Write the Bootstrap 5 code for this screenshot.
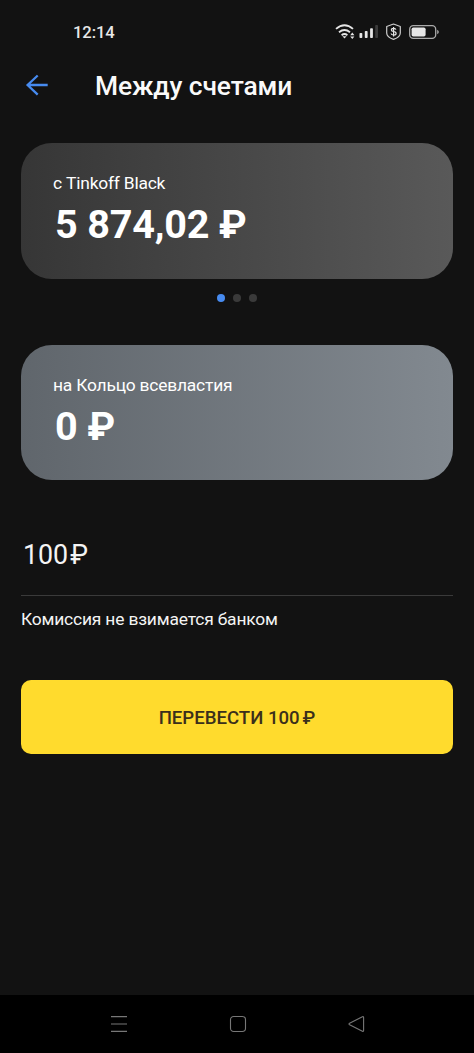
<!DOCTYPE html>
<html lang="ru">
<head>
<meta charset="utf-8">
<meta name="viewport" content="width=device-width, initial-scale=1">
<title>Между счетами</title>
<link href="https://cdn.jsdelivr.net/npm/bootstrap@5.3.0/dist/css/bootstrap.min.css" rel="stylesheet">
<style>
body{background:#121212;color:#fff;font-family:Roboto,"Noto Sans",sans-serif;min-height:1053px;overflow:hidden}
svg{display:block;flex:none}
.status{height:64px;padding:0 34px 0 73px}
.clock{font-size:16.6px;line-height:20px;font-weight:500;color:#e8e8e8;letter-spacing:-.1px;padding-top:1px}
.topbar{height:79px;padding-left:25px}
.title{font-size:26.4px;line-height:42px;font-weight:500;margin:1px 0 0 46px;color:#fafafa;letter-spacing:-.13px}
.content{padding:0 21px}
.account{height:135.5px;border-radius:31px;padding:28px 32px}
.from{background:linear-gradient(90deg,#363636,#595959)}
.to{background:linear-gradient(90deg,#60666c,#828990)}
.label{font-size:17.4px;line-height:24px;letter-spacing:-.2px}
.amount{font-size:39.6px;line-height:48px;font-weight:700;margin:6px 0 0 2px;letter-spacing:-.2px}
.dots{height:66px;padding-top:15.5px;gap:7.6px}
.dots i{width:8.2px;height:8.2px;border-radius:50%;background:#3a3a3a}
.dots i.on{background:#478bf0}
.sum{height:115.5px;padding:58px 0 0 2px;font-size:26.8px;line-height:34px;color:#f4f4f4;border-bottom:1px solid #3a3a3a}
.sum span{margin-left:2px}
.fee{font-size:17.4px;line-height:24px;margin-top:11px;color:#f4f4f4;letter-spacing:-.17px}
.pay{height:73.5px;border-radius:10px;background:#ffdb2d;color:#3b2f1b;font-size:18.6px;line-height:24px;font-weight:500;margin-top:49.5px;--bs-btn-hover-bg:#ffdb2d}
.pay.btn{padding:1.5px 0 0}
.pay span{margin-left:3px}
.sysnav{height:58px;background:#000;padding:0 108px 0 109px}
</style>
</head>
<body class="d-flex flex-column">
<header class="status d-flex align-items-center justify-content-between">
  <span class="clock">12:14</span>
  <svg width="105" height="20" viewBox="335 22 105 20" fill="none" stroke="#e6e6e6">
    <g stroke-width="1.8"><path d="M336 28.9Q344.5 21.7 353 28.9M339 32.2Q344.5 27.8 350 32.2M341.6 35.2Q344.5 32.8 347.4 35.2"/></g>
    <path d="M342.4 36.2h4.2l-2.1 2.4zM350.2 35.2l2.1-2.6 2.1 2.6zM350.2 36.4l2.1 2.6 2.1-2.6z" fill="#e6e6e6" stroke="none"/>
    <g fill="#e6e6e6" stroke="none"><rect x="359.5" y="33" width="2.8" height="5" rx=".8"/><rect x="364.8" y="31" width="2.8" height="7" rx=".8"/><rect x="370.1" y="28.2" width="2.8" height="9.8" rx=".8"/><rect x="375.2" y="25" width="2.8" height="13" rx=".8" fill="#3b3b3b"/></g>
    <path d="M393.5 24l6.8 2.5v6.4q0 3.9-6.8 6.5-6.8-2.6-6.8-6.5v-6.4z" stroke="#ccc" stroke-width="1.2" stroke-linejoin="round"/>
    <path d="M395.9 29.6q-.3-1.3-2.3-1.3-2.2 0-2.2 1.6 0 1.2 2.2 1.6 2.5.4 2.5 1.9 0 1.6-2.5 1.6-2.2 0-2.5-1.5M393.6 27v9.4" stroke-width="1.2"/>
    <rect x="409.7" y="25.7" width="26" height="12.6" rx="3.6" stroke="#aaa" stroke-width="1.3"/>
    <rect x="411.6" y="27.6" width="14" height="8.8" rx="1.7" fill="#e6e6e6" stroke="none"/>
    <path d="M437.2 29.7q1.6.7 1.6 2.3t-1.6 2.3z" fill="#aaa" stroke="none"/>
  </svg>
</header>
<nav class="topbar d-flex align-items-start">
  <svg width="24" height="42" viewBox="25 64 24 42" fill="none" stroke="#478bf0" stroke-width="2.3"><path d="M47.7 85H27.5M37.7 75.5L27.6 85l10.1 9.6"/></svg>
  <h1 class="title">Между счетами</h1>
</nav>
<main class="content flex-grow-1 d-flex flex-column">
  <section class="account from">
    <div class="label">с Tinkoff Black</div>
    <div class="amount">5 874,02 ₽</div>
  </section>
  <div class="dots d-flex justify-content-center"><i class="on"></i><i></i><i></i></div>
  <section class="account to">
    <div class="label">на Кольцо всевластия</div>
    <div class="amount">0 ₽</div>
  </section>
  <div class="sum">100<span>₽</span></div>
  <div class="fee">Комиссия не взимается банком</div>
  <button class="pay btn border-0 w-100" type="button">ПЕРЕВЕСТИ 100<span>₽</span></button>
</main>
<footer class="sysnav d-flex align-items-center justify-content-between">
  <svg width="20" height="20" viewBox="0 0 20 20" stroke="#777" stroke-width="1.2"><path d="M2 2.6h16M2 10h16M2 17.4h16"/></svg>
  <svg width="20" height="20" viewBox="0 0 20 20" fill="none" stroke="#777" stroke-width="1.1"><rect x="2.5" y="2.5" width="15" height="15" rx="3.2"/></svg>
  <svg width="20" height="20" viewBox="0 0 20 20" fill="none" stroke="#777" stroke-width="1.1" stroke-linejoin="round"><path d="M16.4 2.8q1.2-.6 1.2.7v13q0 1.3-1.2.7L3.6 10.7q-1.2-.7 0-1.4z"/></svg>
</footer>
<script src="https://cdn.jsdelivr.net/npm/bootstrap@5.3.0/dist/js/bootstrap.bundle.min.js"></script>
</body>
</html>
